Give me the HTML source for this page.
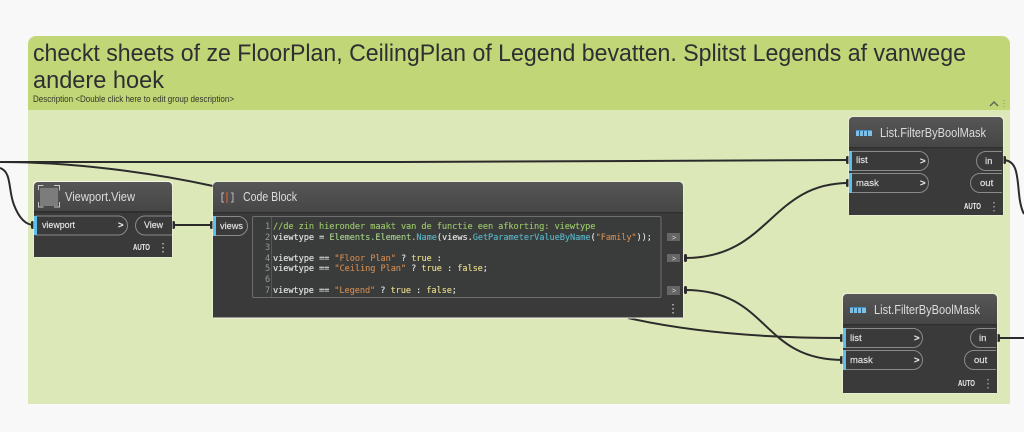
<!DOCTYPE html>
<html><head><meta charset="utf-8"><style>
html,body{margin:0;padding:0;background:#f8f8f8;width:1024px;height:432px;overflow:hidden}
svg{display:block}
text{font-family:"Liberation Sans",sans-serif}
.p{fill:#e4e4e4;font-size:9.5px;stroke:#e4e4e4;stroke-width:.15}
.pill{fill:#3a3a3a;stroke:#8a8a8a;stroke-width:1}
.ttl{fill:#dcdcdc;font-size:13px}
.auto{fill:#eee;font-size:8px;font-weight:bold}
.c{font-family:"DejaVu Sans Mono",monospace;font-size:8.65px;fill:#e8e8e8;stroke:#e8e8e8;stroke-width:.12}
.n{font-family:"DejaVu Sans Mono",monospace;font-size:8.65px;fill:#999}
.w{fill:none;stroke:#2b2b2b;stroke-width:2}
.cm{fill:#9bc76a;stroke:#9bc76a}.g{fill:#a6cf8a;stroke:#a6cf8a}.b{fill:#58b5c8;stroke:#58b5c8}.s{fill:#d08a50;stroke:#d08a50}.k{fill:#e8dc8c;stroke:#e8dc8c}
</style></head><body>
<svg width="1024" height="432" viewBox="0 0 1024 432" xmlns="http://www.w3.org/2000/svg">
<defs>
<linearGradient id="h" x1="0" y1="0" x2="0" y2="1"><stop offset="0" stop-color="#565656"/><stop offset="1" stop-color="#464646"/></linearGradient>
</defs>
<path d="M28 110V44a8 8 0 0 1 8-8H1002a8 8 0 0 1 8 8V110Z" fill="#c1d676"/>
<rect x="28" y="110" width="982" height="294" fill="#dde8b8"/>
<text x="33" y="61" font-size="24.5" fill="#2f2f33" textLength="933" lengthAdjust="spacingAndGlyphs">checkt sheets of ze FloorPlan, CeilingPlan of Legend bevatten. Splitst Legends af vanwege</text>
<text x="33" y="88" font-size="24.5" fill="#2f2f33" textLength="131" lengthAdjust="spacingAndGlyphs">andere hoek</text>
<text x="33" y="102" font-size="9" fill="#33352a" textLength="201" lengthAdjust="spacingAndGlyphs">Description &lt;Double click here to edit group description&gt;</text>
<path d="M990 106l4-4 4 4" fill="none" stroke="#5a6a60" stroke-width="1.5"/>
<path d="M1004 100v1M1004 103v1M1004 106v1" stroke="#9aab78" stroke-width="1.5"/>

<!-- wires -->
<path class="w" d="M0 162H400L849 160"/>
<path class="w" d="M0 162C70 162 150 172 213 186"/>
<path class="w" d="M628 318C690 332 760 338 843 338"/>
<path class="w" d="M0 168C12 172 8 190 14 205C19 218 26 225 34 225"/>
<path class="w" d="M172 225H213"/>
<path class="w" d="M685 258C770 258 770 183 849 183"/>
<path class="w" d="M685 290C770 290 760 360 843 360"/>
<path class="w" d="M1003 160C1024 160 1014 195 1024 214"/>
<path class="w" d="M997 338H1024"/>
<g fill="#2b2b2b">
<rect x="846" y="156" width="3" height="8" rx="1.5"/><rect x="846" y="179" width="3" height="8" rx="1.5"/>
<rect x="840" y="334" width="3" height="8" rx="1.5"/><rect x="840" y="356" width="3" height="8" rx="1.5"/>
<rect x="31" y="221" width="3" height="8" rx="1.5"/><rect x="172" y="221" width="3" height="8" rx="1.5"/><rect x="210" y="221" width="3" height="8" rx="1.5"/>
<rect x="684" y="254" width="3" height="8" rx="1.5"/><rect x="684" y="286" width="3" height="8" rx="1.5"/>
<rect x="1003" y="156" width="3" height="8" rx="1.5"/><rect x="997" y="334" width="3" height="8" rx="1.5"/>
</g>

<!-- Viewport.View -->
<rect x="33.500" y="181" width="139" height="76.500" rx="3" fill="#f4f6ea"/>
<path d="M34 211V186a4 4 0 0 1 4-4H168a4 4 0 0 1 4 4V211Z" fill="url(#h)"/>
<rect x="34" y="211" width="138" height="46" fill="#3a3a3a"/>
<rect x="34" y="211" width="138" height="2" fill="#2f2f2f"/>
<rect x="40" y="188" width="18" height="18" fill="#7c7c7c"/>
<path d="M38.500 190v-4.500h5M54 185.500h5.500v5M38.500 202v5h5M54 207h5.500v-5" fill="none" stroke="#c8c8c8" stroke-width="1"/>
<text x="65" y="201" class="ttl" textLength="70" lengthAdjust="spacingAndGlyphs">Viewport.View</text>
<path class="pill" d="M36 216H118a9.500 9.500 0 0 1 0 19H36Z"/>
<rect x="34" y="216" width="3" height="19" fill="#5cc0ec"/>
<text x="42" y="228" class="p" textLength="33" lengthAdjust="spacingAndGlyphs">viewport</text>
<text x="118" y="228" class="p" font-weight="bold">&gt;</text>
<path class="pill" d="M172 216H145a9.500 9.500 0 0 0 0 19H172"/>
<text x="144" y="228" class="p" textLength="19" lengthAdjust="spacingAndGlyphs">View</text>
<text x="133" y="250" class="auto" textLength="17" lengthAdjust="spacingAndGlyphs">AUTO</text>
<path d="M163 243v1.500M163 247v1.500M163 251v1.500" stroke="#bbb" stroke-width="1.500"/>

<!-- Code Block -->
<rect x="212.500" y="181.500" width="471" height="137" rx="3" fill="#f4f6ea"/>
<path d="M213 212V186a4 4 0 0 1 4-4H679a4 4 0 0 1 4 4V212Z" fill="url(#h)"/>
<rect x="213" y="212" width="470" height="105.500" fill="#3a3a3a"/>
<rect x="213" y="212" width="470" height="1.500" fill="#303030"/>
<path d="M224 193h-2v9h2M231 193h2v9h-2" fill="none" stroke="#bbb" stroke-width="1"/>
<path d="M227 192v11" stroke="#d0612b" stroke-width="1.200"/>
<text x="243" y="201" class="ttl" textLength="54" lengthAdjust="spacingAndGlyphs">Code Block</text>
<path class="pill" d="M215 216.500H238a9.500 9.500 0 0 1 0 19H215Z"/>
<rect x="213" y="216" width="3" height="20" fill="#5cc0ec"/>
<text x="220" y="229" class="p" textLength="23" lengthAdjust="spacingAndGlyphs">views</text>
<rect x="252.500" y="216.500" width="408.500" height="81" rx="1.500" fill="#3a3b3b" stroke="#6e6e6e"/>
<path d="M271.500 217V297" stroke="#565656"/>
<g class="n"><text x="265" y="229" class="n">1</text><text x="265" y="240" class="n">2</text><text x="265" y="250" class="n">3</text><text x="265" y="261" class="n">4</text><text x="265" y="271" class="n">5</text><text x="265" y="282" class="n">6</text><text x="265" y="293" class="n">7</text></g>
<text x="273" y="229" class="c cm" textLength="322.500" xml:space="preserve">//de zin hieronder maakt van de functie een afkorting: viewtype</text>
<text x="273" y="240" class="c" textLength="379" xml:space="preserve">viewtype = <tspan class="g">Elements.Element.</tspan><tspan class="b">Name</tspan>(views.<tspan class="b">GetParameterValueByName</tspan>(<tspan class="s">"Family"</tspan>));</text>
<text x="273" y="261" class="c" textLength="169" xml:space="preserve">viewtype == <tspan class="s">"Floor Plan"</tspan> ? <tspan class="k">true</tspan> :</text>
<text x="273" y="271" class="c" textLength="215" xml:space="preserve">viewtype == <tspan class="s">"Ceiling Plan"</tspan> ? <tspan class="k">true</tspan> : <tspan class="k">false</tspan>;</text>
<text x="273" y="293" class="c" textLength="184" xml:space="preserve">viewtype == <tspan class="s">"Legend"</tspan> ? <tspan class="k">true</tspan> : <tspan class="k">false</tspan>;</text>
<g fill="#666"><rect x="667" y="233" width="13" height="8"/><rect x="667" y="254" width="13" height="8"/><rect x="667" y="286" width="13" height="9"/></g>
<g fill="#ddd" font-size="7"><text x="672" y="240">&gt;</text><text x="672" y="261">&gt;</text><text x="672" y="293">&gt;</text></g>
<path d="M673 304v1.500M673 308v1.500M673 312v1.500" stroke="#bbb" stroke-width="1.500"/>

<!-- List 1 -->
<rect x="848.500" y="116.500" width="155" height="99" rx="3" fill="#f4f6ea"/>
<path d="M849 147V121a4 4 0 0 1 4-4H999a4 4 0 0 1 4 4V147Z" fill="url(#h)"/>
<rect x="849" y="147" width="154" height="68" fill="#3a3a3a"/>
<rect x="849" y="147" width="154" height="1.500" fill="#303030"/>
<rect x="856" y="130" width="16" height="6" fill="#7fc0e8"/>
<path d="M859.500 130v6M863.500 130v6M867.500 130v6" stroke="#2f5f85" stroke-width="1"/>
<rect x="856" y="130" width="16" height="1" fill="#3f8fc8"/>
<text x="880" y="137" class="ttl" textLength="106" lengthAdjust="spacingAndGlyphs">List.FilterByBoolMask</text>
<path class="pill" d="M851 151.500H919a9.500 9.500 0 0 1 0 19H851Z"/>
<path class="pill" d="M851 173.500H919a9.500 9.500 0 0 1 0 19H851Z"/>
<rect x="849" y="151" width="3" height="20" fill="#5cc0ec"/><rect x="849" y="173" width="3" height="20" fill="#5cc0ec"/>
<text x="856" y="163" class="p">list</text><text x="856" y="186" class="p">mask</text>
<text x="920" y="164" class="p" font-weight="bold">&gt;</text><text x="920" y="186" class="p" font-weight="bold">&gt;</text>
<path class="pill" d="M1002 151.500H986a9.500 9.500 0 0 0 0 19H1002"/>
<path class="pill" d="M1002 173.500H980a9.500 9.500 0 0 0 0 19H1002"/>
<text x="985" y="164" class="p">in</text><text x="980" y="186" class="p">out</text>
<text x="964" y="209" class="auto" textLength="17" lengthAdjust="spacingAndGlyphs">AUTO</text>
<path d="M994 202v1.500M994 206v1.500M994 210v1.500" stroke="#999" stroke-width="1.500"/>

<!-- List 2 -->
<rect x="842.500" y="293.500" width="155" height="100" rx="3" fill="#f4f6ea"/>
<path d="M843 324V298a4 4 0 0 1 4-4H993a4 4 0 0 1 4 4V324Z" fill="url(#h)"/>
<rect x="843" y="324" width="154" height="69" fill="#3a3a3a"/>
<rect x="843" y="324" width="154" height="1.500" fill="#303030"/>
<rect x="850" y="307" width="16" height="6" fill="#7fc0e8"/>
<path d="M853.500 307v6M857.500 307v6M861.500 307v6" stroke="#2f5f85" stroke-width="1"/>
<rect x="850" y="307" width="16" height="1" fill="#3f8fc8"/>
<text x="874" y="314" class="ttl" textLength="106" lengthAdjust="spacingAndGlyphs">List.FilterByBoolMask</text>
<path class="pill" d="M845 328.500H913a9.500 9.500 0 0 1 0 19H845Z"/>
<path class="pill" d="M845 350.500H913a9.500 9.500 0 0 1 0 19H845Z"/>
<rect x="843" y="328" width="3" height="20" fill="#5cc0ec"/><rect x="843" y="350" width="3" height="20" fill="#5cc0ec"/>
<text x="850" y="341" class="p">list</text><text x="850" y="363" class="p">mask</text>
<text x="914" y="341" class="p" font-weight="bold">&gt;</text><text x="914" y="363" class="p" font-weight="bold">&gt;</text>
<path class="pill" d="M996 328.500H980a9.500 9.500 0 0 0 0 19H996"/>
<path class="pill" d="M996 350.500H974a9.500 9.500 0 0 0 0 19H996"/>
<text x="979" y="341" class="p">in</text><text x="974" y="363" class="p">out</text>
<text x="958" y="386" class="auto" textLength="17" lengthAdjust="spacingAndGlyphs">AUTO</text>
<path d="M988 379v1.500M988 383v1.500M988 387v1.500" stroke="#999" stroke-width="1.500"/>
</svg>
</body></html>
